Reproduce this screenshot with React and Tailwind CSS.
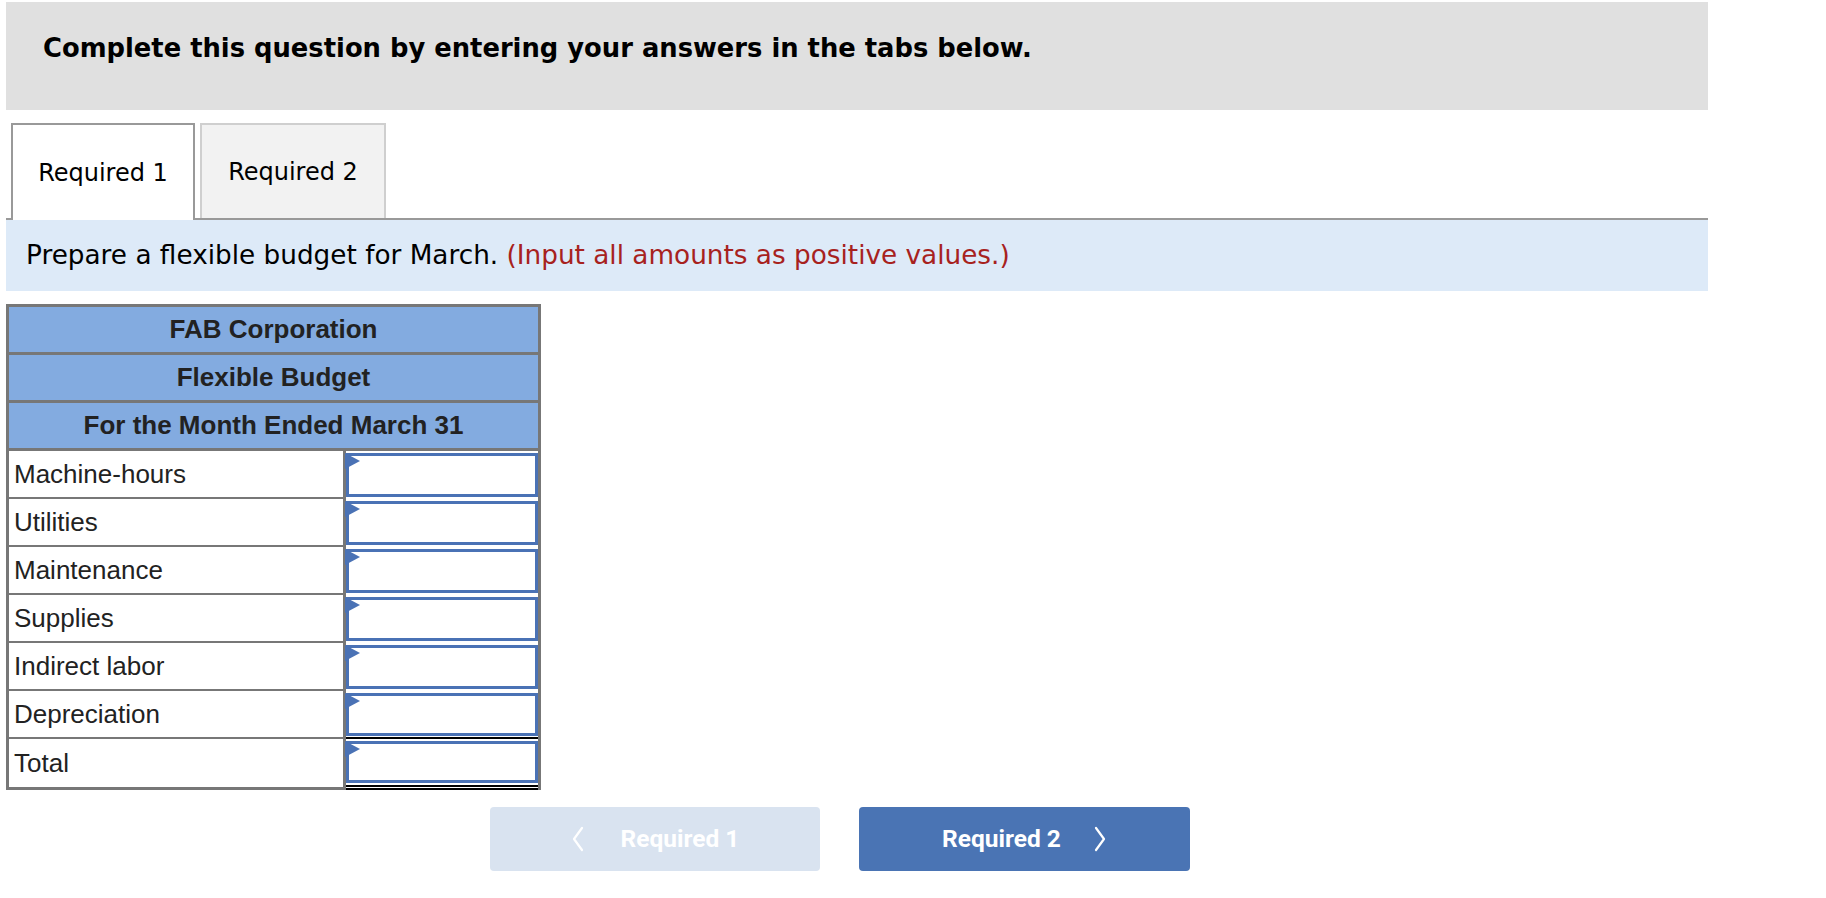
const rows = [
  'Machine-hours',
  'Utilities',
  'Maintenance',
  'Supplies',
  'Indirect labor',
  'Depreciation',
  'Total',
];

const Chevron = ({ dir }) => (
  <svg width="14" height="26" viewBox="0 0 14 26" fill="none" stroke="white" strokeWidth="2.2" strokeLinecap="round" strokeLinejoin="round">
    {dir === 'left' ? <polyline points="11,2 3,13 11,24" /> : <polyline points="3,2 11,13 3,24" />}
  </svg>
);

const InputCell = ({ last, beforeTotal }) => (
  <div
    className={`relative flex-1 pt-[2px] ${
      last ? 'pb-[2px] border-b-[5px] border-double border-black' : beforeTotal ? 'pb-[1px] border-b-2 border-black' : 'pb-[2px]'
    }`}
  >
    <div className="h-full border-[3px] border-[#4a72b5] bg-white" />
    <svg className="absolute left-[-1px] top-[2px] z-10" width="15" height="16" viewBox="0 0 15 16">
      <polygon points="0,0 15,8 0,16" fill="#4a72b5" />
    </svg>
  </div>
);

export default function App() {
  return (
    <div className="w-[1826px] h-[898px] bg-white pl-[6px] pt-[2px]" style={{ fontFamily: '"DejaVu Sans", Verdana, sans-serif' }}>
      {/* Header */}
      <div className="w-[1702px] h-[108px] bg-[#e0e0e0] pl-[37px] pt-[27px]">
        <h1 className="text-[25.8px] font-bold text-black">Complete this question by entering your answers in the tabs below.</h1>
      </div>

      {/* Tabs */}
      <div className="w-[1702px] h-[110px] flex items-end border-b-2 border-[#999] pl-[5px] gap-[5px]">
        <div className="w-[184px] h-[97px] -mb-[2px] bg-white border-2 border-b-0 border-[#999] flex items-center justify-center text-[24px] text-black">
          Required 1
        </div>
        <div className="w-[186px] h-[95px] bg-[#f2f2f2] border-2 border-b-0 border-[#cfcfcf] flex items-center justify-center text-[24px] text-black">
          Required 2
        </div>
      </div>

      {/* Instruction */}
      <div className="w-[1702px] h-[71px] bg-[#ddeaf8] pl-[20px] flex items-center text-[26.3px]">
        <span className="text-black">Prepare a flexible budget for March.&nbsp;</span>
        <span className="text-[#a7221e]">(Input all amounts as positive values.)</span>
      </div>

      {/* Table */}
      <div className="mt-[13px] w-[535px] border-l-[3px] border-r-[3px] border-t-[3px] border-[#777]" style={{ fontFamily: '"Liberation Sans", Arial, sans-serif' }}>
        {['FAB Corporation', 'Flexible Budget', 'For the Month Ended March 31'].map((t) => (
          <div key={t} className="h-[48px] bg-[#83abe0] border-b-[3px] border-[#777] flex items-center justify-center text-[26px] font-bold text-[#222]">
            {t}
          </div>
        ))}
        {rows.map((r, i) => {
          const last = i === rows.length - 1;
          return (
            <div key={r} className={`flex ${last ? 'h-[51px]' : 'h-[48px]'}`}>
              <div className={`w-[337px] border-r-[3px] border-[#777] pl-[5px] flex items-center text-[26px] text-[#222] ${last ? 'border-b-[3px]' : 'border-b-2'}`}>
                {r}
              </div>
              <InputCell last={last} beforeTotal={i === rows.length - 2} />
            </div>
          );
        })}
      </div>

      {/* Nav buttons */}
      <div className="flex gap-[39px] pl-[484px] mt-[17px]" style={{ fontFamily: 'Roboto, "Liberation Sans", sans-serif' }}>
        <button className="w-[330px] h-[64px] rounded-[4px] bg-[#d9e3f0] flex items-center justify-center gap-[36px] text-white text-[24.5px] font-bold">
          <Chevron dir="left" />
          <span>Required 1</span>
        </button>
        <button className="w-[331px] h-[64px] rounded-[4px] bg-[#4a74b4] flex items-center justify-center gap-[32px] text-white text-[24.5px] font-bold">
          <span>Required 2</span>
          <Chevron dir="right" />
        </button>
      </div>
    </div>
  );
}
